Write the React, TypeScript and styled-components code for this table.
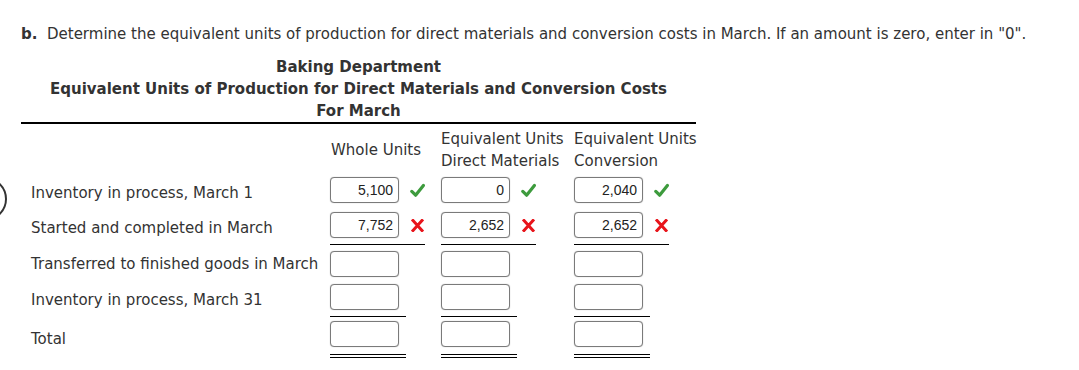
import styled, { createGlobalStyle } from 'styled-components';

const GlobalStyle = createGlobalStyle`
  html, body {
    margin: 0;
    padding: 0;
    background: #fff;
  }
  body {
    font-family: "DejaVu Sans", Verdana, sans-serif;
    font-size: 15px;
    color: #333;
  }
`;

type Mark = 'ok' | 'bad' | undefined;
type Line = 'single' | 'double' | undefined;

interface RowData {
  label: string;
  values: [string, string, string];
  marks?: [Mark, Mark, Mark];
  line?: Line;
  pt: number;
  pb: number;
}

const rows: RowData[] = [
  {
    label: 'Inventory in process, March 1',
    values: ['5,100', '0', '2,040'],
    marks: ['ok', 'ok', 'ok'],
    pt: 3,
    pb: 6,
  },
  {
    label: 'Started and completed in March',
    values: ['7,752', '2,652', '2,652'],
    marks: ['bad', 'bad', 'bad'],
    line: 'single',
    pt: 3,
    pb: 6,
  },
  {
    label: 'Transferred to finished goods in March',
    values: ['', '', ''],
    pt: 6,
    pb: 4,
  },
  {
    label: 'Inventory in process, March 31',
    values: ['', '', ''],
    line: 'single',
    pt: 3,
    pb: 6,
  },
  {
    label: 'Total',
    values: ['', '', ''],
    line: 'double',
    pt: 4,
    pb: 7,
  },
];

const CheckIcon = () => (
  <svg width="15" height="15" viewBox="0 0 15 15">
    <path
      d="M1.8 8.4 L5.6 12.2 L13.4 2.4"
      fill="none"
      stroke="#3d9b3d"
      strokeWidth="3.2"
      strokeLinecap="round"
      strokeLinejoin="round"
    />
  </svg>
);

const CrossIcon = () => (
  <svg width="13" height="13" viewBox="0 0 13 13">
    <path
      d="M2 1.5 L11 11.5 M11 1.5 L2 11.5"
      fill="none"
      stroke="#e8141b"
      strokeWidth="3"
      strokeLinecap="square"
    />
  </svg>
);

export default function App() {
  return (
    <Page>
      <GlobalStyle />
      <Ring />
      <Prompt>
        <b>b.</b>&nbsp; Determine the equivalent units of production for direct
        materials and conversion costs in March. If an amount is zero, enter
        in "0".
      </Prompt>

      <Sheet>
        <Heading>
          <div>Baking Department</div>
          <div>Equivalent Units of Production for Direct Materials and Conversion Costs</div>
          <div>For March</div>
        </Heading>

        <HeaderRow>
          <span />
          <ColHead $pl={1}>Whole Units</ColHead>
          <ColHead>
            Equivalent Units
            <br />
            Direct Materials
          </ColHead>
          <ColHead>
            Equivalent Units
            <br />
            Conversion
          </ColHead>
        </HeaderRow>

        {rows.map((row) => (
          <Row key={row.label}>
            <Label>{row.label}</Label>
            {row.values.map((v, i) => (
              <Cell key={i}>
                <Entry $line={row.line} $pt={row.pt} $pb={row.pb}>
                  <Amount readOnly value={v} />
                  {row.marks?.[i] === 'ok' && (
                    <MarkBox>
                      <CheckIcon />
                    </MarkBox>
                  )}
                  {row.marks?.[i] === 'bad' && (
                    <MarkBox>
                      <CrossIcon />
                    </MarkBox>
                  )}
                </Entry>
              </Cell>
            ))}
          </Row>
        ))}
      </Sheet>
    </Page>
  );
}

const Page = styled.div`
  position: relative;
  width: 1079px;
  height: 370px;
  overflow: hidden;
  padding: 23px 0 0 21px;
  box-sizing: border-box;
`;

const Ring = styled.div`
  position: absolute;
  left: -37px;
  top: 177px;
  width: 40px;
  height: 40px;
  border: 2px solid #333;
  border-radius: 50%;
`;

const Prompt = styled.p`
  margin: 0;
  line-height: 22px;
  white-space: nowrap;

  b {
    font-weight: bold;
  }
`;

const Sheet = styled.div`
  width: 675px;
  margin-top: 11px;
`;

const Heading = styled.div`
  font-weight: bold;
  text-align: center;
  line-height: 22px;
  white-space: nowrap;
  border-bottom: 2px solid #000;
`;

const grid = `
  display: grid;
  grid-template-columns: 309px 111px 133px 122px;
`;

const HeaderRow = styled.div`
  ${grid};
  align-items: center;
  padding: 4px 0 2px;
  line-height: 22px;
`;

const ColHead = styled.div<{ $pl?: number }>`
  padding-left: ${({ $pl }) => $pl ?? 0}px;
  white-space: nowrap;
`;

const Row = styled.div`
  ${grid};
  align-items: stretch;
`;

const Label = styled.div`
  display: flex;
  align-items: center;
  padding: 2px 0 0 10px;
  white-space: nowrap;
`;

const Cell = styled.div`
  display: flex;
  align-items: flex-start;
`;

const Entry = styled.div<{ $line?: Line; $pt: number; $pb: number }>`
  display: flex;
  align-items: center;
  gap: 11px;
  padding: ${({ $pt }) => $pt}px 7px ${({ $pb }) => $pb}px 0;
  border-bottom: ${({ $line }) =>
    $line === 'double'
      ? '4px double #000'
      : $line === 'single'
        ? '1px solid #000'
        : '0'};
`;

const Amount = styled.input`
  box-sizing: border-box;
  width: 69px;
  height: 26px;
  margin: 0;
  padding: 0 5px;
  border: 1.5px solid #7a7a7a;
  border-radius: 4px;
  box-shadow: 0 0 1px rgba(0, 0, 0, 0.35);
  background: #fff;
  font-family: "Liberation Sans", Arial, sans-serif;
  font-size: 14px;
  color: #222;
  text-align: right;
  outline: none;
`;

const MarkBox = styled.span`
  display: inline-flex;
  width: 15px;
  justify-content: center;
  margin-right: -7px;
`;
